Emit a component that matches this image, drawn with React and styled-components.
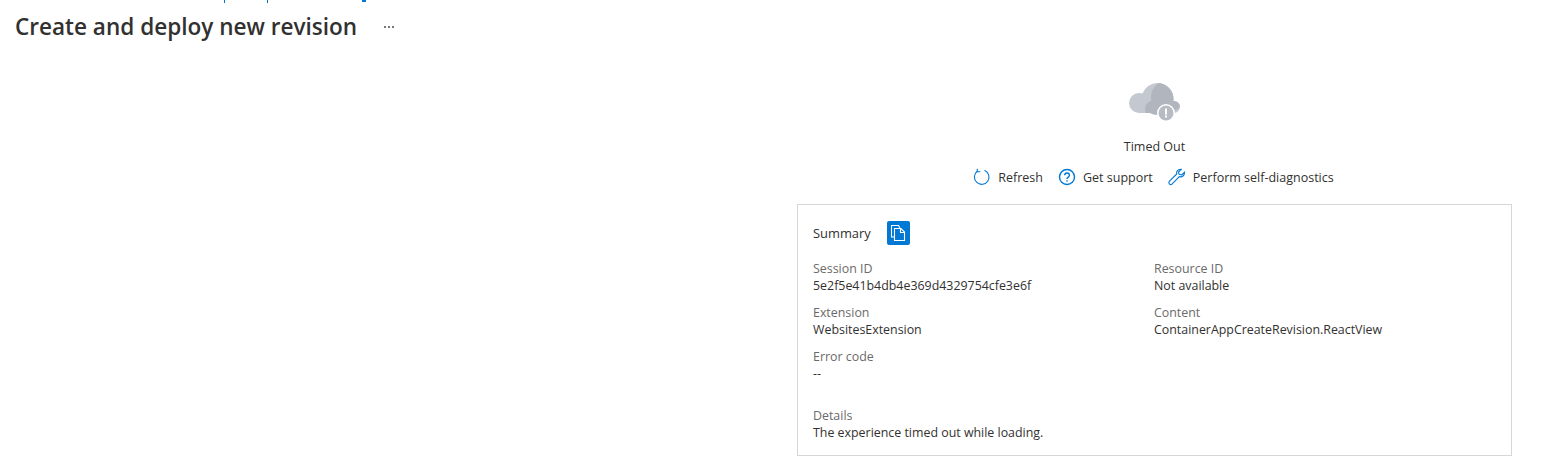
import React from "react";
import styled, { createGlobalStyle } from "styled-components";

const GlobalStyle = createGlobalStyle`
    html, body {
        margin: 0;
        padding: 0;
        background: #fff;
    }
    body {
        font-family: "Open Sans", "Noto Sans", "Liberation Sans", sans-serif;
        color: #323130;
    }
`;

const Page = styled.div`
    display: flex;
    flex-direction: column;
    width: 1559px;
    height: 473px;
    overflow: hidden;
`;

const TopStrip = styled.svg`
    display: block;
    flex-shrink: 0;
    width: 400px;
    height: 4px;
`;

const Header = styled.header`
    display: flex;
    align-items: center;
    height: 46px;
    padding-left: 15px;
`;

const Title = styled.h1`
    margin: 0;
    font-size: 22.55px;
    font-weight: 600;
    line-height: 46px;
    color: #323130;
`;

const More = styled.span`
    margin-left: 27px;
    display: flex;
    gap: 2px;
`;

const Dot = styled.i`
    width: 2px;
    height: 2px;
    background: #7a7876;
`;

const Panel = styled.main`
    display: flex;
    flex-direction: column;
    align-items: center;
    width: 715px;
    margin-left: 797px;
    padding-top: 33px;
`;

const StatusText = styled.div`
    margin-top: 16px;
    font-size: 12.5px;
    line-height: 17px;
    color: #323130;
`;

const Actions = styled.div`
    display: flex;
    gap: 15px;
    margin-top: 12px;
    padding-right: 2px;
`;

const Action = styled.a`
    display: flex;
    align-items: center;
    gap: 7px;
    height: 20px;
    font-size: 12.5px;
    color: #323130;
`;

const Card = styled.section`
    box-sizing: border-box;
    width: 715px;
    height: 252px;
    margin-top: 17px;
    padding: 16px 15px 0;
    border: 1px solid #d6d6d6;
`;

const CardHead = styled.div`
    display: flex;
    align-items: center;
    gap: 16px;
    height: 24px;
`;

const CardTitle = styled.div`
    font-size: 12.9px;
    font-weight: 500;
    color: #323130;
`;

const CopyButton = styled.button`
    display: flex;
    align-items: center;
    justify-content: center;
    width: 23px;
    height: 24px;
    padding: 0;
    border: 0;
    border-radius: 2px;
    background: #0078d4;
`;

const Fields = styled.div`
    display: grid;
    grid-template-columns: 341px 1fr;
    grid-auto-rows: 44px;
    margin-top: 15px;
`;

const Field = styled.div`
    grid-column: ${(props) => props.$wide ? "1 / -1" : "auto"};
    margin-top: ${(props) => props.$wide ? "15px" : "0"};
`;

const Label = styled.div`
    font-size: 12.4px;
    line-height: 17px;
    color: #6b6a69;
`;

const Value = styled.div`
    font-size: 12.4px;
    line-height: 17px;
    color: #323130;
`;

function CloudIcon() {
    return (
        <svg width="52" height="39" viewBox="0 0 52 39">
            <defs>
                <clipPath id="cloud-shape">
                    <circle cx="10" cy="20" r="10" />
                    <circle cx="28.500" cy="16" r="16" />
                    <circle cx="45" cy="24" r="6" />
                    <rect x="10" y="20" width="35" height="10" />
                </clipPath>
            </defs>
            <g clipPath="url(#cloud-shape)">
                <rect width="52" height="30" fill="#c4c8cf" />
                <circle cx="38" cy="14" r="16" fill="#b0b5be" />
                <circle cx="25" cy="26" r="9" fill="#b0b5be" />
                <rect x="25" y="20" width="20" height="10" fill="#b0b5be" />
            </g>
            <circle cx="37" cy="30" r="9" fill="#fff" />
            <circle cx="37" cy="30" r="7.500" fill="#b7bcc4" />
            <rect x="36" y="25.500" width="2" height="6" fill="#fff" />
            <rect x="36" y="32.500" width="2" height="2" fill="#fff" />
        </svg>
    );
}

function RefreshIcon() {
    return (
        <svg width="18" height="18" viewBox="0 0 18 18" fill="none" stroke="#0078d4" strokeWidth="1.100">
            <path d="M11.500 2.300A7.300 7.300 0 1 1 4.200 3.300" />
            <path d="M4.300 .8v3h3" />
        </svg>
    );
}

function HelpIcon() {
    return (
        <svg width="18" height="18" viewBox="0 0 18 18" fill="none" stroke="#0078d4" strokeWidth="1.400">
            <circle cx="9" cy="9" r="7.500" />
            <path d="M6.700 7.200C6.700 5.900 7.700 5 9 5s2.400.9 2.400 2.200c0 1.900-2.400 1.900-2.400 3.900" />
            <rect x="8.300" y="12.200" width="1.400" height="1.400" fill="#0078d4" stroke="none" />
        </svg>
    );
}

function WrenchIcon() {
    return (
        <svg width="18" height="18" viewBox="0 0 18 18" fill="none" stroke="#0078d4" strokeWidth="1.100">
            <path d="M12.500 1.200c-2.500 0-4.300 2.200-3.800 4.800L1.500 13.200c-.8.800-.8 1.900-.1 2.700.8.800 2 .8 2.800 0l7.100-7.200c2.800.8 5.400-1.300 5.200-4.400l-2.900 2.700-2.500-.7-.6-2.300 2.700-2.700c-.2-.1-.4-.1-.7-.1z" />
        </svg>
    );
}

function CopyIcon() {
    return (
        <svg width="18" height="18" viewBox="0 0 18 18" fill="none" stroke="#fff" strokeWidth="1.100">
            <path d="M5.500 13H2.500V1.500h7l1.500 2.500" />
            <path d="M5.500 4.500h6.500l3.500 3.500v8.500h-10z" />
            <path d="M11.500 4.500v4h4" />
        </svg>
    );
}

const fields = [
    ["Session ID", "5e2f5e41b4db4e369d4329754cfe3e6f"],
    ["Resource ID", "Not available"],
    ["Extension", "WebsitesExtension"],
    ["Content", "ContainerAppCreateRevision.ReactView"],
    ["Error code", "--"],
];

export default function App() {
    return (
        <>
            <GlobalStyle />
            <Page>
                <TopStrip viewBox="0 0 400 4">
                    <rect x="224" y="0" width="1" height="3" fill="#0078d4" />
                    <rect x="267" y="0" width="1" height="3" fill="#0078d4" />
                    <rect x="362" y="0" width="4" height="2" fill="#0078d4" />
                </TopStrip>
                <Header>
                    <Title>Create and deploy new revision</Title>
                    <More><Dot /><Dot /><Dot /></More>
                </Header>
                <Panel>
                    <CloudIcon />
                    <StatusText>Timed Out</StatusText>
                    <Actions>
                        <Action><RefreshIcon />Refresh</Action>
                        <Action><HelpIcon />Get support</Action>
                        <Action><WrenchIcon />Perform self-diagnostics</Action>
                    </Actions>
                    <Card>
                        <CardHead>
                            <CardTitle>Summary</CardTitle>
                            <CopyButton><CopyIcon /></CopyButton>
                        </CardHead>
                        <Fields>
                            {fields.map(([label, value]) => (
                                <Field key={label}>
                                    <Label>{label}</Label>
                                    <Value>{value}</Value>
                                </Field>
                            ))}
                            <Field $wide>
                                <Label>Details</Label>
                                <Value>The experience timed out while loading.</Value>
                            </Field>
                        </Fields>
                    </Card>
                </Panel>
            </Page>
        </>
    );
}
